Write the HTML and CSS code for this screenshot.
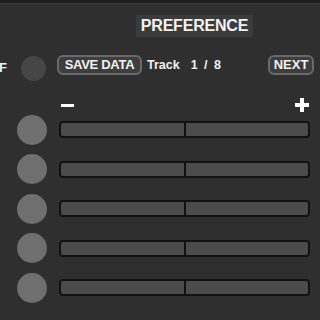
FILE: index.html
```html
<!DOCTYPE html>
<html>
<head>
<meta charset="utf-8">
<link rel="stylesheet" href="styles.css">
</head>
<body>
<div class="app">
  <div class="topbar"></div>
  <div class="title-row"><div class="title">PREFERENCE</div></div>
  <div class="controls">
    <span class="cut">F</span>
    <span class="dot"></span>
    <button class="btn save">SAVE DATA</button>
    <span class="track">Track</span>
    <span class="count">1 <span class="slash">/</span> 8</span>
    <button class="btn next">NEXT</button>
  </div>
  <div class="signs">
    <span class="minus"></span>
    <span class="plus"></span>
  </div>
  <div class="rows">
    <div class="row"><span class="knob"></span><div class="bar"><span class="tick"></span></div></div>
    <div class="row"><span class="knob"></span><div class="bar"><span class="tick"></span></div></div>
    <div class="row"><span class="knob"></span><div class="bar"><span class="tick"></span></div></div>
    <div class="row"><span class="knob"></span><div class="bar"><span class="tick"></span></div></div>
    <div class="row"><span class="knob"></span><div class="bar"><span class="tick"></span></div></div>
  </div>
</div>
</body>
</html>
```

FILE: styles.css
```css
html, body {
  margin: 0;
  padding: 0;
  background: #2f2f2f;
}
.app {
  width: 320px;
  height: 320px;
  overflow: hidden;
  background: #2f2f2f;
  font-family: "Liberation Sans", Arial, sans-serif;
  font-weight: bold;
  color: #f2f2f2;
}
.topbar {
  height: 3px;
  background: #1f1f1f;
  border-bottom: 1px solid #3a3a3a;
}
.title-row {
  display: flex;
  padding-left: 136px;
  margin-top: 11px;
}
.title {
  width: 117px;
  height: 22px;
  background: #3b3b3b;
  font-size: 16px;
  line-height: 22px;
  text-align: center;
  letter-spacing: -0.2px;
}
.controls {
  display: flex;
  align-items: center;
  height: 20px;
  margin-top: 18px;
}
.cut {
  font-size: 13px;
  margin-left: -1px;
  margin-top: 5px;
  width: 11px;
}
.dot {
  width: 25px;
  height: 25px;
  border-radius: 50%;
  background: #464646;
  margin-left: 11px;
  margin-top: 6px;
  flex: none;
}
.btn {
  font-family: inherit;
  font-weight: bold;
  font-size: 13px;
  color: #f2f2f2;
  background: #3e3e3e;
  border: 2px solid #6a6a6a;
  border-radius: 6px;
  height: 20px;
  padding: 0;
  line-height: 16px;
}
.save {
  width: 85px;
  margin-left: 11px;
  letter-spacing: -0.3px;
}
.track {
  font-size: 12.5px;
  margin-left: 5px;
}
.count {
  font-size: 12.5px;
  margin-left: 11px;
  word-spacing: 3px;
}
.next {
  width: 46px;
  margin-left: auto;
  margin-right: 6px;
}
.signs {
  position: relative;
  height: 13px;
  margin-top: 22px;
}
.minus {
  position: absolute;
  left: 61px;
  top: 7px;
  width: 13px;
  height: 3px;
  background: #fff;
}
.plus {
  position: absolute;
  left: 295px;
  top: 1px;
  width: 14px;
  height: 14px;
}
.plus::before, .plus::after {
  content: "";
  position: absolute;
  background: #fff;
}
.plus::before {
  left: 0;
  top: 5px;
  width: 14px;
  height: 4px;
}
.plus::after {
  left: 5px;
  top: 0;
  width: 4px;
  height: 14px;
}
.rows {
  display: flex;
  flex-direction: column;
}
.row {
  display: flex;
  align-items: center;
  height: 39.5px;
}
.knob {
  width: 30px;
  height: 30px;
  border-radius: 50%;
  background: #6f6f6f;
  margin-left: 17px;
  flex: none;
}
.bar {
  position: relative;
  margin-left: 12px;
  width: 247px;
  height: 13px;
  background: #4b4b4b;
  border: 2px solid #121212;
  border-radius: 4px;
}
.tick {
  position: absolute;
  left: 123px;
  top: 0;
  width: 2px;
  height: 13px;
  background: #111;
}
```
